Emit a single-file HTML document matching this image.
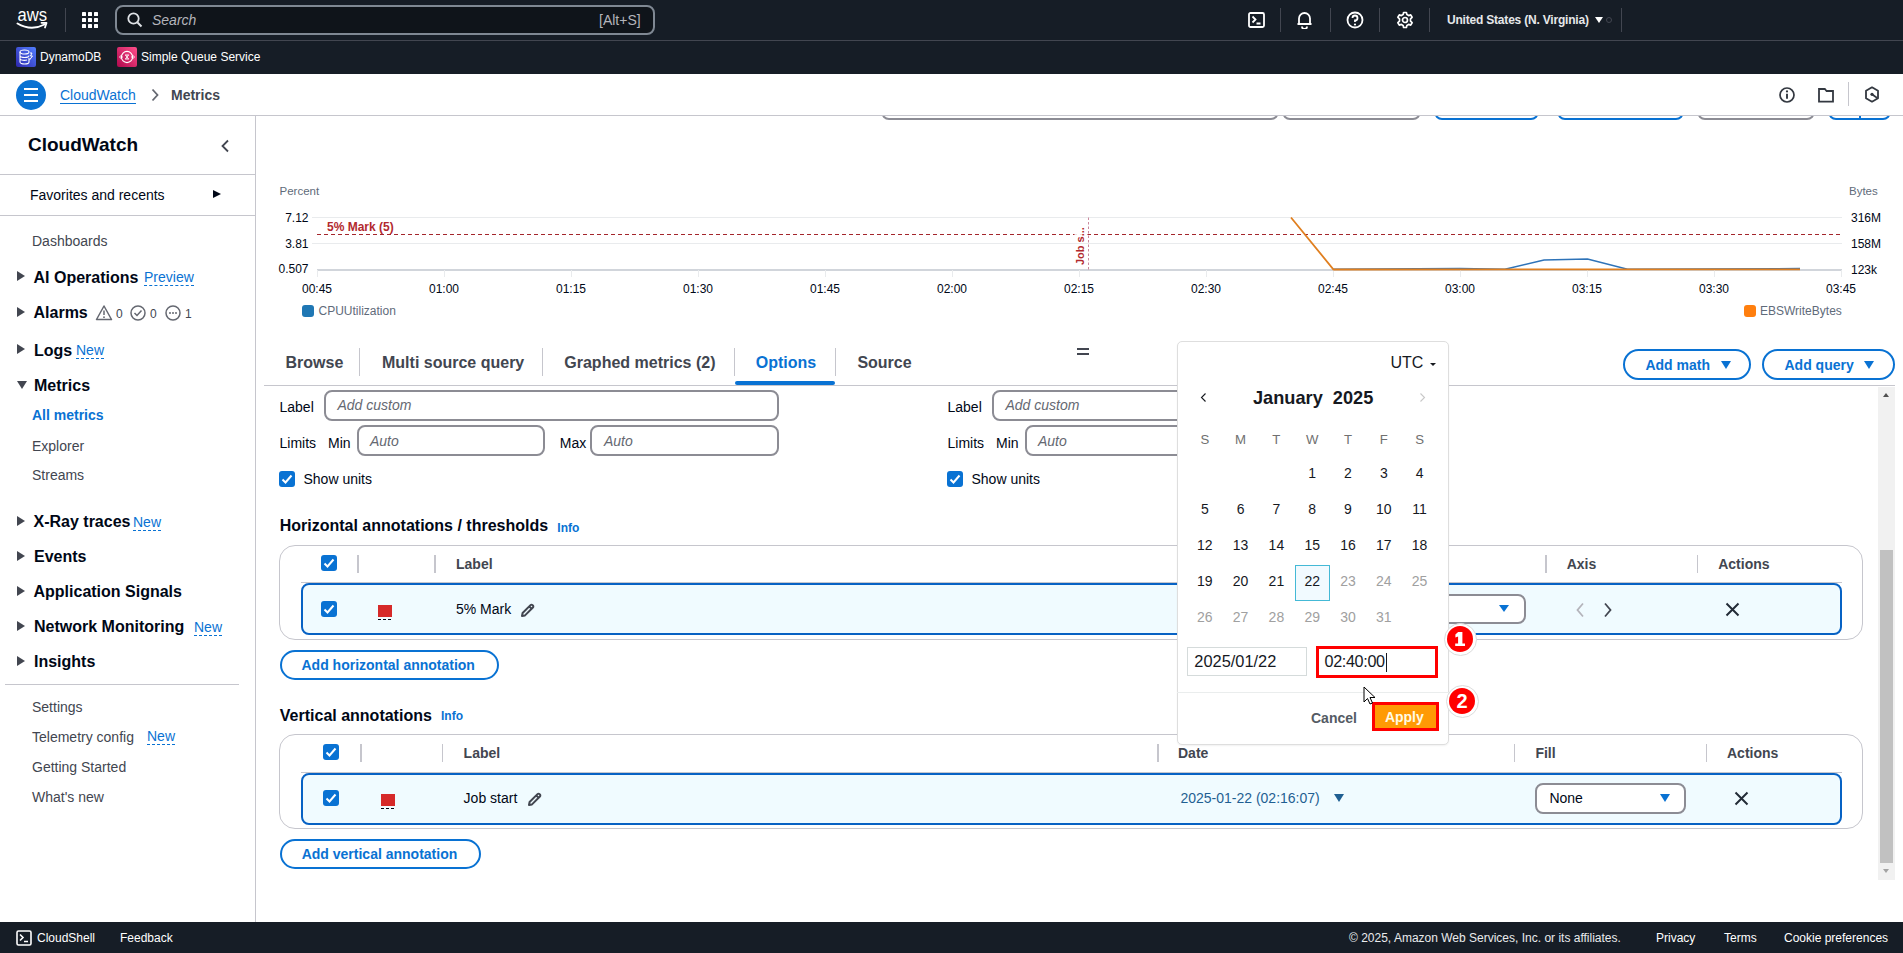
<!DOCTYPE html>
<html><head><meta charset="utf-8">
<style>
*{box-sizing:border-box;margin:0;padding:0}
html,body{width:1903px;height:953px;overflow:hidden;background:#fff;font-family:"Liberation Sans",sans-serif;color:#000716}
.a{position:absolute;white-space:nowrap}
#top{position:absolute;left:0;top:0;width:1903px;height:40px;background:#161d26}
#top2{position:absolute;left:0;top:40px;width:1903px;height:34px;background:#161d26;border-top:1px solid #424650}
.sep{position:absolute;width:1px;background:#424650}
#crumb{position:absolute;z-index:5;left:0;top:74px;width:1903px;height:42px;background:#fff;border-bottom:1px solid #c6c6cd}
#side{position:absolute;left:0;top:116px;width:256px;height:806px;border-right:1px solid #c6c6cd;background:#fff}
#foot{position:absolute;left:0;top:922px;width:1903px;height:31px;background:#161d26}
.w{color:#fff}
.nav{font-size:14px;color:#424650}
.navb{font-size:16px;font-weight:bold;color:#000716}
.new{font-size:14px;color:#0972d3;border-bottom:1px dashed #0972d3;line-height:15px}
.tri{position:absolute;width:0;height:0;border-top:5px solid transparent;border-bottom:5px solid transparent;border-left:8px solid #424650}
</style></head><body>

<!-- TOP BAR -->
<div id="top">
  <svg class="a" style="left:16px;top:8px" width="34" height="24" viewBox="0 0 34 24">
    <text x="1.5" y="12.6" font-family="Liberation Sans" font-size="17.5" fill="#fff" textLength="29.5" lengthAdjust="spacingAndGlyphs">aws</text>
    <path d="M1.5 15.5 Q15 23.5 28.5 16.5" stroke="#fff" stroke-width="1.9" fill="none" stroke-linecap="round"/>
    <path d="M25.5 14.8 L30.5 15 L29 19.5" stroke="#fff" stroke-width="1.8" fill="none" stroke-linecap="round" stroke-linejoin="round"/>
  </svg>
  <div class="sep" style="left:65px;top:8px;height:24px"></div>
  <svg class="a" style="left:82px;top:12px" width="17" height="17" viewBox="0 0 17 17" fill="#fff">
    <rect x="0" y="0" width="4" height="4" rx="0.6"/><rect x="6" y="0" width="4" height="4" rx="0.6"/><rect x="12" y="0" width="4" height="4" rx="0.6"/>
    <rect x="0" y="6" width="4" height="4" rx="0.6"/><rect x="6" y="6" width="4" height="4" rx="0.6"/><rect x="12" y="6" width="4" height="4" rx="0.6"/>
    <rect x="0" y="12" width="4" height="4" rx="0.6"/><rect x="6" y="12" width="4" height="4" rx="0.6"/><rect x="12" y="12" width="4" height="4" rx="0.6"/>
  </svg>
  <div class="a" style="left:115px;top:5px;width:540px;height:30px;border:2px solid #7f8893;border-radius:8px;background:#0f141a"></div>
  <svg class="a" style="left:127px;top:12px" width="16" height="16" viewBox="0 0 16 16"><circle cx="6.5" cy="6.5" r="5.2" stroke="#dfe2e6" stroke-width="1.8" fill="none"/><path d="M10.5 10.5 L14.5 14.5" stroke="#dfe2e6" stroke-width="2"/></svg>
  <div class="a" style="left:152px;top:12px;font-size:14px;font-style:italic;color:#b4b4bb">Search</div>
  <div class="a" style="left:599px;top:12px;font-size:14px;color:#b4b4bb">[Alt+S]</div>

  <svg class="a" style="left:1248px;top:12px" width="17" height="16" viewBox="0 0 17 16"><rect x="1" y="1" width="15" height="14" rx="1.5" stroke="#fff" stroke-width="1.8" fill="none"/><path d="M4.5 4.5 L7.5 7.5 L4.5 10.5 M8.5 11.5 H12.5" stroke="#fff" stroke-width="1.8" fill="none"/></svg>
  <div class="sep" style="left:1280px;top:8px;height:24px"></div>
  <svg class="a" style="left:1296px;top:11px" width="17" height="18" viewBox="0 0 17 18"><path d="M3 13 V7.5 A5.5 5.5 0 0 1 14 7.5 V13 Z M1.5 13 H15.5" stroke="#fff" stroke-width="1.8" fill="none" stroke-linejoin="round"/><path d="M6 15.5 A2.5 2.5 0 0 0 11 15.5" stroke="#fff" stroke-width="1.8" fill="none"/></svg>
  <div class="sep" style="left:1330px;top:8px;height:24px"></div>
  <svg class="a" style="left:1346px;top:11px" width="18" height="18" viewBox="0 0 18 18"><circle cx="9" cy="9" r="7.5" stroke="#fff" stroke-width="1.8" fill="none"/><path d="M6.5 7 A2.5 2.5 0 1 1 9 9.5 V11" stroke="#fff" stroke-width="1.8" fill="none"/><circle cx="9" cy="13.5" r="1.1" fill="#fff"/></svg>
  <div class="sep" style="left:1379px;top:8px;height:24px"></div>
  <svg class="a" style="left:1396px;top:11px" width="18" height="18" viewBox="0 0 18 18"><path d="M7.6 1.5 H10.4 L10.9 3.6 L12.6 4.6 L14.7 3.9 L16.1 6.3 L14.5 7.8 V10.2 L16.1 11.7 L14.7 14.1 L12.6 13.4 L10.9 14.4 L10.4 16.5 H7.6 L7.1 14.4 L5.4 13.4 L3.3 14.1 L1.9 11.7 L3.5 10.2 V7.8 L1.9 6.3 L3.3 3.9 L5.4 4.6 L7.1 3.6 Z" stroke="#fff" stroke-width="1.7" fill="none" stroke-linejoin="round"/><circle cx="9" cy="9" r="2.5" stroke="#fff" stroke-width="1.7" fill="none"/></svg>
  <div class="sep" style="left:1429px;top:8px;height:24px"></div>
  <div class="a w" style="left:1447px;top:13.8px;font-size:12px;line-height:1;font-weight:bold;letter-spacing:-0.2px;color:#e6e8ea">United States (N. Virginia)</div>
  <div class="a" style="left:1606px;top:16.5px;width:6px;height:6px;border:1px solid #424650;border-radius:50%"></div>
  <div class="a" style="left:1595px;top:17px;width:0;height:0;border-left:4px solid transparent;border-right:4px solid transparent;border-top:6.5px solid #fff"></div>
  <div class="sep" style="left:1621px;top:8px;height:24px"></div>
</div>
<div id="top2">
  <div class="a" style="left:16px;top:6px;width:20px;height:20px;border-radius:2px;background:linear-gradient(45deg,#2e27ad,#527fff)"></div>
  <svg class="a" style="left:16px;top:6px" width="20" height="20" viewBox="0 0 20 20"><ellipse cx="8.5" cy="5" rx="4.5" ry="2" stroke="#fff" stroke-width="1.1" fill="none"/><path d="M4 5 V15 A4.5 2 0 0 0 13 15 V11 M4 8.5 A4.5 2 0 0 0 13 8.5 M4 12 A4.5 2 0 0 0 11 13" stroke="#fff" stroke-width="1.1" fill="none"/><path d="M14 6 L16 6 L14.5 9 L16.5 9 L13.5 13" stroke="#fff" stroke-width="1" fill="none"/></svg>
  <div class="a w" style="left:40px;top:10px;line-height:1;font-size:12px;color:#fff">DynamoDB</div>
  <div class="a" style="left:117px;top:6px;width:20px;height:20px;border-radius:2px;background:linear-gradient(45deg,#b0084d,#ff4f8b)"></div>
  <svg class="a" style="left:117px;top:6px" width="20" height="20" viewBox="0 0 20 20"><circle cx="10" cy="10" r="5.6" stroke="#fff" stroke-width="1.1" fill="none"/><path d="M2.5 10 L4 8.5 L5.5 10 L4 11.5 Z M17.5 10 L16 8.5 L14.5 10 L16 11.5 Z" stroke="#fff" stroke-width="0.9" fill="none"/><path d="M8 8 H12 M8 12 H12 M8.5 8 L11.5 12 M11.5 8 L8.5 12" stroke="#fff" stroke-width="0.9" fill="none"/></svg>
  <div class="a w" style="left:141px;top:10px;line-height:1;font-size:12px;color:#fff">Simple Queue Service</div>
</div>

<!-- BREADCRUMB -->
<div id="crumb">
  <div class="a" style="left:16px;top:6px;width:30px;height:30px;border-radius:50%;background:#0972d3"></div>
  <div class="a" style="left:24px;top:14px;width:14px;height:2.4px;background:#fff"></div>
  <div class="a" style="left:24px;top:19.8px;width:14px;height:2.4px;background:#fff"></div>
  <div class="a" style="left:24px;top:25.6px;width:14px;height:2.4px;background:#fff"></div>
  <div class="a" style="left:60px;top:13px;font-size:14px;color:#0972d3;border-bottom:1px solid #0972d3;line-height:16px">CloudWatch</div>
  <svg class="a" style="left:150px;top:14px" width="10" height="14" viewBox="0 0 10 14"><path d="M2.5 1.5 L7.5 7 L2.5 12.5" stroke="#656871" stroke-width="1.8" fill="none"/></svg>
  <div class="a" style="left:171px;top:13px;font-size:14px;font-weight:bold;color:#424650">Metrics</div>
  <svg class="a" style="left:1777.5px;top:12.3px" width="18" height="18" viewBox="0 0 18 18"><circle cx="9" cy="9" r="7" stroke="#333840" stroke-width="1.7" fill="none"/><path d="M9 7.8 V12.8" stroke="#333840" stroke-width="1.9"/><circle cx="9" cy="5.4" r="1.1" fill="#333840"/></svg>
  <svg class="a" style="left:1817.3px;top:12.8px" width="18" height="17" viewBox="0 0 18 17"><path d="M2 2 H7.8 L9.6 4 H16 V14.6 H2 Z" stroke="#333840" stroke-width="1.8" fill="none" stroke-linejoin="miter"/></svg>
  <div class="sep" style="left:1848px;top:8px;height:24px;background:#c6c6cd"></div>
  <svg class="a" style="left:1863px;top:12px" width="18" height="18" viewBox="0 0 18 18"><path d="M9 1.3 L15 4.8 V12.2 L9 15.7 L3 12.2 V4.8 Z" stroke="#333840" stroke-width="1.8" fill="none" stroke-linejoin="round"/><circle cx="9" cy="8.3" r="1.6" fill="#333840"/><path d="M9 8.3 L14.2 12" stroke="#333840" stroke-width="1.7"/></svg>
</div>

<!-- SIDEBAR -->
<div id="side"></div>
<div class="a" style="left:28px;top:134.9px;font-size:19px;line-height:1;font-weight:bold;color:#000716">CloudWatch</div>
<svg class="a" style="left:219px;top:139px" width="12" height="14" viewBox="0 0 12 14"><path d="M9 1.5 L3.5 7 L9 12.5" stroke="#424650" stroke-width="1.8" fill="none"/></svg>
<div class="a" style="left:0px;top:174px;width:256px;height:1px;background:#c6c6cd"></div>
<div class="a" style="left:30px;top:187.8px;font-size:14px;line-height:1;color:#000716">Favorites and recents</div>
<div class="a" style="left:213px;top:190.3px;width:0;height:0;border-top:4.7px solid transparent;border-bottom:4.7px solid transparent;border-left:8.4px solid #000716"></div>
<div class="a" style="left:0px;top:215px;width:256px;height:1px;background:#c6c6cd"></div>
<div class="a" style="left:32px;top:234.3px;font-size:14px;line-height:1;color:#424650">Dashboards</div>
<div class="a" style="left:17px;top:271.2px;width:0;height:0;border-top:5px solid transparent;border-bottom:5px solid transparent;border-left:8.8px solid #424650"></div>
<div class="a" style="left:33.5px;top:269.5px;font-size:16px;line-height:1;font-weight:bold;color:#000716">AI Operations</div>
<div class="a" style="left:144px;top:270.3px;font-size:14px;line-height:15px;color:#0972d3;padding-bottom:0;border-bottom:1px dashed #0972d3">Preview</div>
<div class="a" style="left:17px;top:307.2px;width:0;height:0;border-top:5px solid transparent;border-bottom:5px solid transparent;border-left:8.8px solid #424650"></div>
<div class="a" style="left:33.5px;top:305.1px;font-size:16px;line-height:1;font-weight:bold;color:#000716">Alarms</div>
<svg class="a" style="left:95px;top:304px" width="100" height="18" viewBox="0 0 100 18">
<path d="M9 2 L16.5 15.5 H1.5 Z" stroke="#656871" stroke-width="1.5" fill="none" stroke-linejoin="round"/><path d="M9 6.5 V11" stroke="#656871" stroke-width="1.5"/><circle cx="9" cy="13.2" r="0.9" fill="#656871"/>
<circle cx="43" cy="9" r="7" stroke="#656871" stroke-width="1.5" fill="none"/><path d="M39.5 9 L42 11.5 L46.5 6.5" stroke="#656871" stroke-width="1.5" fill="none"/>
<circle cx="78" cy="9" r="7" stroke="#656871" stroke-width="1.5" fill="none"/><circle cx="75" cy="9" r="1" fill="#656871"/><circle cx="78" cy="9" r="1" fill="#656871"/><circle cx="81" cy="9" r="1" fill="#656871"/>
</svg>
<div class="a" style="left:116px;top:308.4px;font-size:12px;line-height:1;color:#424650">0</div>
<div class="a" style="left:150px;top:308.4px;font-size:12px;line-height:1;color:#424650">0</div>
<div class="a" style="left:185px;top:308.4px;font-size:12px;line-height:1;color:#424650">1</div>
<div class="a" style="left:17px;top:344.0px;width:0;height:0;border-top:5px solid transparent;border-bottom:5px solid transparent;border-left:8.8px solid #424650"></div>
<div class="a" style="left:34px;top:342.7px;font-size:16px;line-height:1;font-weight:bold;color:#000716">Logs</div>
<div class="a" style="left:76px;top:342.9px;font-size:14px;line-height:15px;color:#0972d3;padding-bottom:0;border-bottom:1px dashed #0972d3">New</div>
<div class="a" style="left:16.5px;top:380.7px;width:0;height:0;border-left:5px solid transparent;border-right:5px solid transparent;border-top:8.6px solid #424650"></div>
<div class="a" style="left:34px;top:377.5px;font-size:16px;line-height:1;font-weight:bold;color:#000716">Metrics</div>
<div class="a" style="left:32px;top:408.1px;font-size:14px;line-height:1;font-weight:bold;color:#0972d3">All metrics</div>
<div class="a" style="left:32px;top:438.5px;font-size:14px;line-height:1;color:#424650">Explorer</div>
<div class="a" style="left:32px;top:468.1px;font-size:14px;line-height:1;color:#424650">Streams</div>
<div class="a" style="left:17px;top:516.0px;width:0;height:0;border-top:5px solid transparent;border-bottom:5px solid transparent;border-left:8.8px solid #424650"></div>
<div class="a" style="left:33.5px;top:513.9px;font-size:16px;line-height:1;font-weight:bold;color:#000716">X-Ray traces</div>
<div class="a" style="left:133px;top:514.5px;font-size:14px;line-height:15px;color:#0972d3;padding-bottom:0;border-bottom:1px dashed #0972d3">New</div>
<div class="a" style="left:17px;top:551.0px;width:0;height:0;border-top:5px solid transparent;border-bottom:5px solid transparent;border-left:8.8px solid #424650"></div>
<div class="a" style="left:34px;top:548.9px;font-size:16px;line-height:1;font-weight:bold;color:#000716">Events</div>
<div class="a" style="left:17px;top:586.0px;width:0;height:0;border-top:5px solid transparent;border-bottom:5px solid transparent;border-left:8.8px solid #424650"></div>
<div class="a" style="left:33.5px;top:583.9px;font-size:16px;line-height:1;font-weight:bold;color:#000716">Application Signals</div>
<div class="a" style="left:17px;top:621.0px;width:0;height:0;border-top:5px solid transparent;border-bottom:5px solid transparent;border-left:8.8px solid #424650"></div>
<div class="a" style="left:34px;top:619.4px;font-size:16px;line-height:1;font-weight:bold;color:#000716">Network Monitoring</div>
<div class="a" style="left:194px;top:619.9px;font-size:14px;line-height:15px;color:#0972d3;padding-bottom:0;border-bottom:1px dashed #0972d3">New</div>
<div class="a" style="left:17px;top:656.0px;width:0;height:0;border-top:5px solid transparent;border-bottom:5px solid transparent;border-left:8.8px solid #424650"></div>
<div class="a" style="left:34px;top:654.4px;font-size:16px;line-height:1;font-weight:bold;color:#000716">Insights</div>
<div class="a" style="left:5px;top:684px;width:234px;height:1px;background:#c6c6cd"></div>
<div class="a" style="left:32px;top:700.1px;font-size:14px;line-height:1;color:#424650">Settings</div>
<div class="a" style="left:32px;top:729.9px;font-size:14px;line-height:1;color:#424650">Telemetry config</div>
<div class="a" style="left:147px;top:729.1px;font-size:14px;line-height:15px;color:#0972d3;padding-bottom:0;border-bottom:1px dashed #0972d3">New</div>
<div class="a" style="left:32px;top:759.8px;font-size:14px;line-height:1;color:#424650">Getting Started</div>
<div class="a" style="left:32px;top:789.7px;font-size:14px;line-height:1;color:#424650">What's new</div>
<!-- MAIN -->
<div class="a" style="left:881px;top:90px;width:398px;height:30px;border:2px solid #8c8c94;border-radius:8px;z-index:0"></div>
<div class="a" style="left:1282px;top:90px;width:139px;height:30px;border:2px solid #8c8c94;border-radius:8px;z-index:0"></div>
<div class="a" style="left:1434px;top:90px;width:105px;height:30px;border:2px solid #0972d3;border-radius:8px;z-index:0"></div>
<div class="a" style="left:1557px;top:90px;width:127px;height:30px;border:2px solid #0972d3;border-radius:8px;z-index:0"></div>
<div class="a" style="left:1697px;top:90px;width:118px;height:30px;border:2px solid #8c8c94;border-radius:8px;z-index:0"></div>
<div class="a" style="left:1828px;top:90px;width:63px;height:30px;border:2px solid #0972d3;border-radius:8px;z-index:0"></div>
<div class="a" style="left:1859px;top:110px;width:1.5px;height:10px;background:#0972d3"></div>
<div class="a" style="left:279.5px;top:186.1px;font-size:11.5px;line-height:1;color:#5f6b7a">Percent</div>
<div class="a" style="right:1594.5px;text-align:right;top:211.6px;font-size:12px;line-height:1;color:#000716">7.12</div>
<div class="a" style="right:1594.5px;text-align:right;top:237.6px;font-size:12px;line-height:1;color:#000716">3.81</div>
<div class="a" style="right:1594.5px;text-align:right;top:263.3px;font-size:12px;line-height:1;color:#000716">0.507</div>
<div class="a" style="left:1849px;top:186.3px;font-size:11.5px;line-height:1;color:#5f6b7a">Bytes</div>
<div class="a" style="left:1851px;top:211.6px;font-size:12px;line-height:1;color:#000716">316M</div>
<div class="a" style="left:1851px;top:237.8px;font-size:12px;line-height:1;color:#000716">158M</div>
<div class="a" style="left:1851px;top:263.8px;font-size:12px;line-height:1;color:#000716">123k</div>
<div class="a" style="left:312px;top:217px;width:1530px;height:1px;background:#e9ebed"></div>
<div class="a" style="left:312px;top:243px;width:1530px;height:1px;background:#e9ebed"></div>
<div class="a" style="left:317px;top:268.5px;width:1525px;height:2px;background:#d1d5db"></div>
<div class="a" style="left:317px;top:270px;width:1px;height:7px;background:#e9ebed"></div>
<div class="a" style="left:267px;width:100px;text-align:center;top:282.8px;font-size:12px;line-height:1;color:#000716">00:45</div>
<div class="a" style="left:444px;top:270px;width:1px;height:7px;background:#e9ebed"></div>
<div class="a" style="left:394px;width:100px;text-align:center;top:282.8px;font-size:12px;line-height:1;color:#000716">01:00</div>
<div class="a" style="left:571px;top:270px;width:1px;height:7px;background:#e9ebed"></div>
<div class="a" style="left:521px;width:100px;text-align:center;top:282.8px;font-size:12px;line-height:1;color:#000716">01:15</div>
<div class="a" style="left:698px;top:270px;width:1px;height:7px;background:#e9ebed"></div>
<div class="a" style="left:648px;width:100px;text-align:center;top:282.8px;font-size:12px;line-height:1;color:#000716">01:30</div>
<div class="a" style="left:825px;top:270px;width:1px;height:7px;background:#e9ebed"></div>
<div class="a" style="left:775px;width:100px;text-align:center;top:282.8px;font-size:12px;line-height:1;color:#000716">01:45</div>
<div class="a" style="left:952px;top:270px;width:1px;height:7px;background:#e9ebed"></div>
<div class="a" style="left:902px;width:100px;text-align:center;top:282.8px;font-size:12px;line-height:1;color:#000716">02:00</div>
<div class="a" style="left:1079px;top:270px;width:1px;height:7px;background:#e9ebed"></div>
<div class="a" style="left:1029px;width:100px;text-align:center;top:282.8px;font-size:12px;line-height:1;color:#000716">02:15</div>
<div class="a" style="left:1206px;top:270px;width:1px;height:7px;background:#e9ebed"></div>
<div class="a" style="left:1156px;width:100px;text-align:center;top:282.8px;font-size:12px;line-height:1;color:#000716">02:30</div>
<div class="a" style="left:1333px;top:270px;width:1px;height:7px;background:#e9ebed"></div>
<div class="a" style="left:1283px;width:100px;text-align:center;top:282.8px;font-size:12px;line-height:1;color:#000716">02:45</div>
<div class="a" style="left:1460px;top:270px;width:1px;height:7px;background:#e9ebed"></div>
<div class="a" style="left:1410px;width:100px;text-align:center;top:282.8px;font-size:12px;line-height:1;color:#000716">03:00</div>
<div class="a" style="left:1587px;top:270px;width:1px;height:7px;background:#e9ebed"></div>
<div class="a" style="left:1537px;width:100px;text-align:center;top:282.8px;font-size:12px;line-height:1;color:#000716">03:15</div>
<div class="a" style="left:1714px;top:270px;width:1px;height:7px;background:#e9ebed"></div>
<div class="a" style="left:1664px;width:100px;text-align:center;top:282.8px;font-size:12px;line-height:1;color:#000716">03:30</div>
<div class="a" style="left:1841px;top:270px;width:1px;height:7px;background:#e9ebed"></div>
<div class="a" style="left:1791px;width:100px;text-align:center;top:282.8px;font-size:12px;line-height:1;color:#000716">03:45</div>
<svg class="a" style="left:0;top:0" width="1903" height="330">
<line x1="317" y1="234.5" x2="1842" y2="234.5" stroke="#a4262c" stroke-width="1.2" stroke-dasharray="4,3"/>
<rect x="1074.5" y="229" width="13" height="11" fill="#fff" fill-opacity="0.85"/>
<line x1="1088.5" y1="217.5" x2="1088.5" y2="270" stroke="#c98a9f" stroke-width="1" stroke-dasharray="2.5,2"/>
<polyline points="1333,269.3 1460,268.6 1505,269.3 1544,260 1587.5,259 1627.5,269.3 1800,268.6" stroke="#2e73b8" stroke-width="1.6" fill="none"/>
<polyline points="1291,217.5 1333.5,269.5 1800,269.3" stroke="#e07f1f" stroke-width="1.8" fill="none"/>
<text x="0" y="0" transform="translate(1084.3,265) rotate(-90)" font-family="Liberation Sans" font-size="11" font-weight="bold" fill="#b2292e">Job s...</text>
</svg>
<div class="a" style="left:327px;top:220.8px;font-size:12px;line-height:1;font-weight:bold;color:#b2292e">5% Mark (5)</div>
<div class="a" style="left:302px;top:305px;width:12px;height:12px;background:#1f77b4;border-radius:3px"></div>
<div class="a" style="left:318.5px;top:305.1px;font-size:12px;line-height:1;color:#5f6b7a">CPUUtilization</div>
<div class="a" style="left:1744px;top:305px;width:12px;height:12px;background:#ff7f0e;border-radius:3px"></div>
<div class="a" style="left:1760px;top:305.1px;font-size:12px;line-height:1;color:#5f6b7a">EBSWriteBytes</div>
<div class="a" style="left:285.5px;top:355.0px;font-size:16px;line-height:1;font-weight:bold;color:#424650">Browse</div>
<div class="a" style="left:359px;top:348px;width:1px;height:28px;background:#c6c6cd"></div>
<div class="a" style="left:382px;top:355.0px;font-size:16px;line-height:1;font-weight:bold;color:#424650">Multi source query</div>
<div class="a" style="left:542px;top:348px;width:1px;height:28px;background:#c6c6cd"></div>
<div class="a" style="left:564.3px;top:355.0px;font-size:16px;line-height:1;font-weight:bold;color:#424650">Graphed metrics (2)</div>
<div class="a" style="left:733.5px;top:348px;width:1px;height:28px;background:#c6c6cd"></div>
<div class="a" style="left:755.8px;top:355.0px;font-size:16px;line-height:1;font-weight:bold;color:#0972d3">Options</div>
<div class="a" style="left:835px;top:348px;width:1px;height:28px;background:#c6c6cd"></div>
<div class="a" style="left:857.4px;top:355.0px;font-size:16px;line-height:1;font-weight:bold;color:#424650">Source</div>
<div class="a" style="left:264px;top:385px;width:1631px;height:1px;background:#c6c6cd"></div>
<div class="a" style="left:735.3px;top:381px;width:99.5px;height:4px;background:#0972d3;border-radius:4px"></div>
<div class="a" style="left:1077px;top:348px;width:12px;height:2px;background:#424650"></div>
<div class="a" style="left:1077px;top:353px;width:12px;height:2px;background:#424650"></div>
<div class="a" style="left:1623.4px;top:349.3px;width:127.89999999999986px;height:31.099999999999966px;border:2px solid #0972d3;border-radius:20px;background:#fff"></div>
<div class="a" style="left:1645.4px;top:357.8px;font-size:14px;line-height:1;font-weight:bold;color:#0972d3">Add math</div>
<div class="a" style="left:1721px;top:361.2px;width:0;height:0;border-left:5px solid transparent;border-right:5px solid transparent;border-top:8px solid #0972d3"></div>
<div class="a" style="left:1762.4px;top:349.3px;width:132.19999999999982px;height:31.099999999999966px;border:2px solid #0972d3;border-radius:20px;background:#fff"></div>
<div class="a" style="left:1784.5px;top:357.8px;font-size:14px;line-height:1;font-weight:bold;color:#0972d3">Add query</div>
<div class="a" style="left:1863.5px;top:361.2px;width:0;height:0;border-left:5px solid transparent;border-right:5px solid transparent;border-top:8px solid #0972d3"></div>
<div class="a" style="left:279.5px;top:400.3px;font-size:14px;line-height:1;color:#000716">Label</div>
<div class="a" style="left:323.8px;top:390px;width:455.2px;height:30.5px;border:2px solid #8c8c94;border-radius:8px;background:#fff"></div>
<div class="a" style="left:337.5px;top:398.4px;font-size:14px;line-height:1;font-style:italic;color:#656871">Add custom</div>
<div class="a" style="left:279.5px;top:436.1px;font-size:14px;line-height:1;color:#000716">Limits</div>
<div class="a" style="left:328px;top:436.1px;font-size:14px;line-height:1;color:#000716">Min</div>
<div class="a" style="left:356.5px;top:425.4px;width:188.20000000000005px;height:31.100000000000023px;border:2px solid #8c8c94;border-radius:8px;background:#fff"></div>
<div class="a" style="left:370px;top:434.4px;font-size:14px;line-height:1;font-style:italic;color:#656871">Auto</div>
<div class="a" style="left:559.8px;top:436.1px;font-size:14px;line-height:1;color:#000716">Max</div>
<div class="a" style="left:590px;top:425.4px;width:189px;height:31.100000000000023px;border:2px solid #8c8c94;border-radius:8px;background:#fff"></div>
<div class="a" style="left:604px;top:434.4px;font-size:14px;line-height:1;font-style:italic;color:#656871">Auto</div>
<svg class="a" style="left:279px;top:471px" width="16" height="16" viewBox="0 0 16 16"><rect x="0" y="0" width="16" height="16" rx="3" fill="#0972d3"/><path d="M3.5 8.5 L6.5 11.5 L12.5 4.5" stroke="#fff" stroke-width="2" fill="none"/></svg>
<div class="a" style="left:303.5px;top:472.1px;font-size:14px;line-height:1;color:#000716">Show units</div>
<div class="a" style="left:947.5px;top:400.3px;font-size:14px;line-height:1;color:#000716">Label</div>
<div class="a" style="left:991.8px;top:390px;width:455.20000000000005px;height:30.5px;border:2px solid #8c8c94;border-radius:8px;background:#fff"></div>
<div class="a" style="left:1005.5px;top:398.4px;font-size:14px;line-height:1;font-style:italic;color:#656871">Add custom</div>
<div class="a" style="left:947.5px;top:436.1px;font-size:14px;line-height:1;color:#000716">Limits</div>
<div class="a" style="left:996px;top:436.1px;font-size:14px;line-height:1;color:#000716">Min</div>
<div class="a" style="left:1024.5px;top:425.4px;width:188.20000000000005px;height:31.100000000000023px;border:2px solid #8c8c94;border-radius:8px;background:#fff"></div>
<div class="a" style="left:1038px;top:434.4px;font-size:14px;line-height:1;font-style:italic;color:#656871">Auto</div>
<div class="a" style="left:1227.8px;top:436.1px;font-size:14px;line-height:1;color:#000716">Max</div>
<div class="a" style="left:1258px;top:425.4px;width:189px;height:31.100000000000023px;border:2px solid #8c8c94;border-radius:8px;background:#fff"></div>
<div class="a" style="left:1272px;top:434.4px;font-size:14px;line-height:1;font-style:italic;color:#656871">Auto</div>
<svg class="a" style="left:947px;top:471px" width="16" height="16" viewBox="0 0 16 16"><rect x="0" y="0" width="16" height="16" rx="3" fill="#0972d3"/><path d="M3.5 8.5 L6.5 11.5 L12.5 4.5" stroke="#fff" stroke-width="2" fill="none"/></svg>
<div class="a" style="left:971.5px;top:472.1px;font-size:14px;line-height:1;color:#000716">Show units</div>
<div class="a" style="left:279.7px;top:518.3px;font-size:16px;line-height:1;font-weight:bold;color:#000716">Horizontal annotations / thresholds</div>
<div class="a" style="left:557.3px;top:522.0px;font-size:12px;line-height:1;font-weight:bold;color:#0972d3">Info</div>
<div class="a" style="left:279.3px;top:545.4px;width:1583.5px;height:95.10000000000002px;border:1px solid #c6c6cd;border-radius:16px;background:#fff"></div>
<svg class="a" style="left:321px;top:555px" width="16" height="16" viewBox="0 0 16 16"><rect x="0" y="0" width="16" height="16" rx="3" fill="#0972d3"/><path d="M3.5 8.5 L6.5 11.5 L12.5 4.5" stroke="#fff" stroke-width="2" fill="none"/></svg>
<div class="a" style="left:357px;top:554.5px;width:2px;height:18px;background:#c6c6cd;width:1.5px"></div>
<div class="a" style="left:434px;top:554.5px;width:2px;height:18px;background:#c6c6cd;width:1.5px"></div>
<div class="a" style="left:1545px;top:554.5px;width:2px;height:18px;background:#c6c6cd;width:1.5px"></div>
<div class="a" style="left:1696.5px;top:554.5px;width:2px;height:18px;background:#c6c6cd;width:1.5px"></div>
<div class="a" style="left:456px;top:556.9px;font-size:14px;line-height:1;font-weight:bold;color:#424650">Label</div>
<div class="a" style="left:1566.7px;top:556.9px;font-size:14px;line-height:1;font-weight:bold;color:#424650">Axis</div>
<div class="a" style="left:1718.2px;top:556.9px;font-size:14px;line-height:1;font-weight:bold;color:#424650">Actions</div>
<div class="a" style="left:300.5px;top:582.2px;width:1541px;height:1px;background:#c6c6cd"></div>
<div class="a" style="left:300.5px;top:583.4px;width:1541px;height:52px;border:2px solid #0762c4;border-radius:8px;background:#f0fbff"></div>
<svg class="a" style="left:321px;top:601px" width="16" height="16" viewBox="0 0 16 16"><rect x="0" y="0" width="16" height="16" rx="3" fill="#0972d3"/><path d="M3.5 8.5 L6.5 11.5 L12.5 4.5" stroke="#fff" stroke-width="2" fill="none"/></svg>
<div class="a" style="left:378px;top:605px;width:14px;height:11.6px;background:#d62a2a"></div>
<div class="a" style="left:378px;top:618.5px;width:14px;height:1.5px;background:repeating-linear-gradient(90deg,#000716 0 3px,transparent 3px 5px)"></div>
<div class="a" style="left:456px;top:602.2px;font-size:14px;line-height:1;color:#000716">5% Mark</div>
<svg class="a" style="left:520px;top:603.1px" width="15" height="15" viewBox="0 0 15 15"><path d="M2 13 L2.6 10 L10.5 2.1 A1.4 1.4 0 0 1 12.5 2.1 L12.9 2.5 A1.4 1.4 0 0 1 12.9 4.5 L5 12.4 Z M9.2 3.4 L11.6 5.8" stroke="#424650" stroke-width="2" fill="none" stroke-linejoin="round"/></svg>
<div class="a" style="left:1300px;top:593.6px;width:225.5px;height:30.5px;border:2px solid #8c8c94;border-radius:8px;background:#fff"></div>
<div class="a" style="left:1499px;top:605.4px;width:0;height:0;border-left:5.2px solid transparent;border-right:5.2px solid transparent;border-top:7.5px solid #0972d3"></div>
<svg class="a" style="left:1574px;top:602px" width="40" height="16" viewBox="0 0 40 16"><path d="M9 1.5 L3.5 8 L9 14.5" stroke="#b4b4bb" stroke-width="1.8" fill="none"/><path d="M31 1.5 L36.5 8 L31 14.5" stroke="#424650" stroke-width="1.8" fill="none"/></svg>
<svg class="a" style="left:1724.5px;top:601.5px" width="15" height="15" viewBox="0 0 15 15"><path d="M1.5 1.5 L13.5 13.5 M13.5 1.5 L1.5 13.5" stroke="#232b37" stroke-width="2" fill="none"/></svg>
<div class="a" style="left:279.5px;top:649.6px;width:219px;height:30.7px;border:2px solid #0972d3;border-radius:20px;background:#fff"></div>
<div class="a" style="left:301.5px;top:658.1px;font-size:14px;line-height:1;font-weight:bold;color:#0972d3">Add horizontal annotation</div>
<div class="a" style="left:279.8px;top:707.5px;font-size:16px;line-height:1;font-weight:bold;color:#000716">Vertical annotations</div>
<div class="a" style="left:441px;top:710.3px;font-size:12px;line-height:1;font-weight:bold;color:#0972d3">Info</div>
<div class="a" style="left:279.3px;top:734.4px;width:1583.5px;height:95.10000000000002px;border:1px solid #c6c6cd;border-radius:16px;background:#fff"></div>
<svg class="a" style="left:323.3px;top:744.4px" width="16" height="16" viewBox="0 0 16 16"><rect x="0" y="0" width="16" height="16" rx="3" fill="#0972d3"/><path d="M3.5 8.5 L6.5 11.5 L12.5 4.5" stroke="#fff" stroke-width="2" fill="none"/></svg>
<div class="a" style="left:360px;top:743.9px;width:2px;height:18px;background:#c6c6cd;width:1.5px"></div>
<div class="a" style="left:441.5px;top:743.9px;width:2px;height:18px;background:#c6c6cd;width:1.5px"></div>
<div class="a" style="left:1157px;top:743.9px;width:2px;height:18px;background:#c6c6cd;width:1.5px"></div>
<div class="a" style="left:1513.5px;top:743.9px;width:2px;height:18px;background:#c6c6cd;width:1.5px"></div>
<div class="a" style="left:1705.5px;top:743.9px;width:2px;height:18px;background:#c6c6cd;width:1.5px"></div>
<div class="a" style="left:463.6px;top:745.7px;font-size:14px;line-height:1;font-weight:bold;color:#424650">Label</div>
<div class="a" style="left:1178px;top:745.7px;font-size:14px;line-height:1;font-weight:bold;color:#424650">Date</div>
<div class="a" style="left:1535.4px;top:745.7px;font-size:14px;line-height:1;font-weight:bold;color:#424650">Fill</div>
<div class="a" style="left:1727px;top:745.7px;font-size:14px;line-height:1;font-weight:bold;color:#424650">Actions</div>
<div class="a" style="left:300.5px;top:771.7px;width:1541px;height:1px;background:#c6c6cd"></div>
<div class="a" style="left:300.5px;top:772.9px;width:1541px;height:51.799999999999955px;border:2px solid #0762c4;border-radius:8px;background:#f0fbff"></div>
<svg class="a" style="left:323.3px;top:790.3px" width="16" height="16" viewBox="0 0 16 16"><rect x="0" y="0" width="16" height="16" rx="3" fill="#0972d3"/><path d="M3.5 8.5 L6.5 11.5 L12.5 4.5" stroke="#fff" stroke-width="2" fill="none"/></svg>
<div class="a" style="left:381px;top:794px;width:14px;height:11.6px;background:#d62a2a"></div>
<div class="a" style="left:381px;top:807.5px;width:14px;height:1.5px;background:repeating-linear-gradient(90deg,#000716 0 3px,transparent 3px 5px)"></div>
<div class="a" style="left:463.6px;top:791.1px;font-size:14px;line-height:1;color:#000716">Job start</div>
<svg class="a" style="left:527.3px;top:792px" width="15" height="15" viewBox="0 0 15 15"><path d="M2 13 L2.6 10 L10.5 2.1 A1.4 1.4 0 0 1 12.5 2.1 L12.9 2.5 A1.4 1.4 0 0 1 12.9 4.5 L5 12.4 Z M9.2 3.4 L11.6 5.8" stroke="#424650" stroke-width="2" fill="none" stroke-linejoin="round"/></svg>
<div class="a" style="left:1180.4px;top:790.8px;font-size:14px;line-height:1;color:#1f5f92">2025-01-22 (02:16:07)</div>
<div class="a" style="left:1333.6px;top:793.5px;width:0;height:0;border-left:5.2px solid transparent;border-right:5.2px solid transparent;border-top:8px solid #1f5f92"></div>
<div class="a" style="left:1535.4px;top:782.5px;width:151px;height:31px;border:2px solid #8c8c94;border-radius:8px;background:#fff"></div>
<div class="a" style="left:1549.4px;top:791.1px;font-size:14px;line-height:1;color:#000716">None</div>
<div class="a" style="left:1660px;top:794px;width:0;height:0;border-left:5.2px solid transparent;border-right:5.2px solid transparent;border-top:8px solid #0972d3"></div>
<svg class="a" style="left:1733.5px;top:790.5px" width="15" height="15" viewBox="0 0 15 15"><path d="M1.5 1.5 L13.5 13.5 M13.5 1.5 L1.5 13.5" stroke="#232b37" stroke-width="2" fill="none"/></svg>
<div class="a" style="left:279.5px;top:838.8px;width:201px;height:30.5px;border:2px solid #0972d3;border-radius:20px;background:#fff"></div>
<div class="a" style="left:301.7px;top:846.8px;font-size:14px;line-height:1;font-weight:bold;color:#0972d3">Add vertical annotation</div>
<div class="a" style="left:1878px;top:386.7px;width:17px;height:493px;background:#f1f1f1"></div>
<div class="a" style="left:1880px;top:550px;width:13px;height:313px;background:#c1c1c1"></div>
<div class="a" style="left:1883px;top:392.5px;width:0;height:0;border-left:3.6px solid transparent;border-right:3.6px solid transparent;border-bottom:4.5px solid #505050"></div>
<div class="a" style="left:1883px;top:869px;width:0;height:0;border-left:3.6px solid transparent;border-right:3.6px solid transparent;border-top:4.5px solid #a3a3a3"></div>
<!-- POPUP -->
<div class="a" style="left:1176.5px;top:341.3px;width:272px;height:403.5px;background:#fff;border:1px solid #dedede;border-radius:5px;box-shadow:0 1px 2px rgba(0,0,0,0.06)"></div>
<div class="a" style="left:1390.4px;top:354.5px;font-size:16px;line-height:1;color:#16191f">UTC</div>
<div class="a" style="left:1430px;top:362.5px;width:0;height:0;border-left:3px solid transparent;border-right:3px solid transparent;border-top:3.5px solid #16191f"></div>
<svg class="a" style="left:1199px;top:392px" width="9" height="11" viewBox="0 0 9 11"><path d="M6.5 1.5 L2.5 5.5 L6.5 9.5" stroke="#16191f" stroke-width="1.1" fill="none"/></svg>
<svg class="a" style="left:1418px;top:392px" width="9" height="11" viewBox="0 0 9 11"><path d="M2.5 1.5 L6.5 5.5 L2.5 9.5" stroke="#c8c8c8" stroke-width="1.1" fill="none"/></svg>
<div class="a" style="left:1253px;top:388.7px;font-size:18.2px;line-height:1;font-weight:bold;color:#16191f">January&nbsp;&nbsp;2025</div>
<div class="a" style="left:1154.8px;width:100px;text-align:center;top:432.5px;font-size:13.2px;line-height:1;color:#707070">S</div>
<div class="a" style="left:1190.6px;width:100px;text-align:center;top:432.5px;font-size:13.2px;line-height:1;color:#707070">M</div>
<div class="a" style="left:1226.4px;width:100px;text-align:center;top:432.5px;font-size:13.2px;line-height:1;color:#707070">T</div>
<div class="a" style="left:1262.2px;width:100px;text-align:center;top:432.5px;font-size:13.2px;line-height:1;color:#707070">W</div>
<div class="a" style="left:1298px;width:100px;text-align:center;top:432.5px;font-size:13.2px;line-height:1;color:#707070">T</div>
<div class="a" style="left:1333.8px;width:100px;text-align:center;top:432.5px;font-size:13.2px;line-height:1;color:#707070">F</div>
<div class="a" style="left:1369.6px;width:100px;text-align:center;top:432.5px;font-size:13.2px;line-height:1;color:#707070">S</div>
<div class="a" style="left:1295.2px;top:565.4px;width:34.7px;height:35.5px;background:#f1faff;border:1px solid #44b9d6"></div>
<div class="a" style="left:1262.2px;width:100px;text-align:center;top:466.2px;font-size:14px;line-height:1;color:#16191f">1</div>
<div class="a" style="left:1298px;width:100px;text-align:center;top:466.2px;font-size:14px;line-height:1;color:#16191f">2</div>
<div class="a" style="left:1333.8px;width:100px;text-align:center;top:466.2px;font-size:14px;line-height:1;color:#16191f">3</div>
<div class="a" style="left:1369.6px;width:100px;text-align:center;top:466.2px;font-size:14px;line-height:1;color:#16191f">4</div>
<div class="a" style="left:1154.8px;width:100px;text-align:center;top:502.2px;font-size:14px;line-height:1;color:#16191f">5</div>
<div class="a" style="left:1190.6px;width:100px;text-align:center;top:502.2px;font-size:14px;line-height:1;color:#16191f">6</div>
<div class="a" style="left:1226.4px;width:100px;text-align:center;top:502.2px;font-size:14px;line-height:1;color:#16191f">7</div>
<div class="a" style="left:1262.2px;width:100px;text-align:center;top:502.2px;font-size:14px;line-height:1;color:#16191f">8</div>
<div class="a" style="left:1298px;width:100px;text-align:center;top:502.2px;font-size:14px;line-height:1;color:#16191f">9</div>
<div class="a" style="left:1333.8px;width:100px;text-align:center;top:502.2px;font-size:14px;line-height:1;color:#16191f">10</div>
<div class="a" style="left:1369.6px;width:100px;text-align:center;top:502.2px;font-size:14px;line-height:1;color:#16191f">11</div>
<div class="a" style="left:1154.8px;width:100px;text-align:center;top:538.2px;font-size:14px;line-height:1;color:#16191f">12</div>
<div class="a" style="left:1190.6px;width:100px;text-align:center;top:538.2px;font-size:14px;line-height:1;color:#16191f">13</div>
<div class="a" style="left:1226.4px;width:100px;text-align:center;top:538.2px;font-size:14px;line-height:1;color:#16191f">14</div>
<div class="a" style="left:1262.2px;width:100px;text-align:center;top:538.2px;font-size:14px;line-height:1;color:#16191f">15</div>
<div class="a" style="left:1298px;width:100px;text-align:center;top:538.2px;font-size:14px;line-height:1;color:#16191f">16</div>
<div class="a" style="left:1333.8px;width:100px;text-align:center;top:538.2px;font-size:14px;line-height:1;color:#16191f">17</div>
<div class="a" style="left:1369.6px;width:100px;text-align:center;top:538.2px;font-size:14px;line-height:1;color:#16191f">18</div>
<div class="a" style="left:1154.8px;width:100px;text-align:center;top:574.2px;font-size:14px;line-height:1;color:#16191f">19</div>
<div class="a" style="left:1190.6px;width:100px;text-align:center;top:574.2px;font-size:14px;line-height:1;color:#16191f">20</div>
<div class="a" style="left:1226.4px;width:100px;text-align:center;top:574.2px;font-size:14px;line-height:1;color:#16191f">21</div>
<div class="a" style="left:1262.2px;width:100px;text-align:center;top:574.2px;font-size:14px;line-height:1;color:#16191f">22</div>
<div class="a" style="left:1298px;width:100px;text-align:center;top:574.2px;font-size:14px;line-height:1;color:#a0a0a0">23</div>
<div class="a" style="left:1333.8px;width:100px;text-align:center;top:574.2px;font-size:14px;line-height:1;color:#a0a0a0">24</div>
<div class="a" style="left:1369.6px;width:100px;text-align:center;top:574.2px;font-size:14px;line-height:1;color:#a0a0a0">25</div>
<div class="a" style="left:1154.8px;width:100px;text-align:center;top:610.2px;font-size:14px;line-height:1;color:#a0a0a0">26</div>
<div class="a" style="left:1190.6px;width:100px;text-align:center;top:610.2px;font-size:14px;line-height:1;color:#a0a0a0">27</div>
<div class="a" style="left:1226.4px;width:100px;text-align:center;top:610.2px;font-size:14px;line-height:1;color:#a0a0a0">28</div>
<div class="a" style="left:1262.2px;width:100px;text-align:center;top:610.2px;font-size:14px;line-height:1;color:#a0a0a0">29</div>
<div class="a" style="left:1298px;width:100px;text-align:center;top:610.2px;font-size:14px;line-height:1;color:#a0a0a0">30</div>
<div class="a" style="left:1333.8px;width:100px;text-align:center;top:610.2px;font-size:14px;line-height:1;color:#a0a0a0">31</div>
<div class="a" style="left:1187.4px;top:647.3px;width:119.2px;height:29px;border:1px solid #d5dbdb;background:#fff"></div>
<div class="a" style="left:1194.3px;top:653.1px;font-size:16.4px;line-height:1;color:#16191f">2025/01/22</div>
<div class="a" style="left:1316.2px;top:646.1px;width:121.6px;height:31.5px;border:3px solid #ff0000;background:#fff"></div>
<div class="a" style="left:1324.5px;top:653.3px;font-size:16.2px;line-height:1;color:#16191f;letter-spacing:-0.35px">02:40:00</div>
<div class="a" style="left:1386px;top:652.5px;width:1.2px;height:19px;background:#16191f"></div>
<div class="a" style="left:1177px;top:692px;width:271.5px;height:1px;background:#eaeded"></div>
<div class="a" style="left:1311px;top:711.0px;font-size:14px;line-height:1;font-weight:bold;color:#545b64">Cancel</div>
<div class="a" style="left:1372px;top:702px;width:66.8px;height:29px;border:3px solid #ff0000;background:#ff9a05"></div>
<div class="a" style="left:1384.9px;top:710.4px;font-size:14px;line-height:1;font-weight:bold;color:#fffbe6">Apply</div>
<div class="a" style="left:1443.6px;top:622.6px;width:33px;height:33px;background:#fff;border:1px solid #dcdcdc;border-radius:50%"></div>
<div class="a" style="left:1447.1px;top:626.1px;width:26px;height:26px;background:#f00;border-radius:50%"></div>
<svg class="a" style="left:1454.8999999999999px;top:631.7px" width="10.4" height="14.4" viewBox="0 0 10.4 14.4"><path d="M3.1 0 H7.4 V11.4 H10.2 V14.4 H0.2 V11.4 H3.1 V4.6 L0.4 5.6 V2.6 Z" fill="#fff"/></svg>
<div class="a" style="left:1445.5px;top:684.5px;width:33px;height:33px;background:#fff;border:1px solid #dcdcdc;border-radius:50%"></div>
<div class="a" style="left:1449px;top:688px;width:26px;height:26px;background:#f00;border-radius:50%"></div>
<div class="a" style="left:1412px;width:100px;text-align:center;top:691.4px;font-size:20px;line-height:1;font-weight:bold;color:#fff">2</div>
<svg class="a" style="left:1363px;top:686px" width="14" height="20" viewBox="0 0 14 20"><path d="M1 1 L1 16 L4.5 12.5 L7 18 L9.5 17 L7 11.5 L12 11.5 Z" fill="#fff" stroke="#000" stroke-width="1" stroke-linejoin="round"/></svg>
<!-- FOOTER -->
<div id="foot"></div>
<svg class="a" style="left:16px;top:930px" width="16" height="16" viewBox="0 0 16 16"><rect x="1" y="1" width="14" height="14" rx="1.5" stroke="#fff" stroke-width="1.6" fill="none"/><path d="M4 4.5 L7 7.5 L4 10.5 M8 11.5 H12" stroke="#fff" stroke-width="1.6" fill="none"/></svg>
<div class="a" style="left:37px;top:931.6px;font-size:12px;line-height:1;color:#fff">CloudShell</div>
<div class="a" style="left:120px;top:931.6px;font-size:12px;line-height:1;color:#fff">Feedback</div>
<div class="a" style="left:1349px;top:931.6px;font-size:12px;line-height:1;color:#e9ebed">© 2025, Amazon Web Services, Inc. or its affiliates.</div>
<div class="a" style="left:1656px;top:931.6px;font-size:12px;line-height:1;color:#fff">Privacy</div>
<div class="a" style="left:1724px;top:931.6px;font-size:12px;line-height:1;color:#fff">Terms</div>
<div class="a" style="left:1784px;top:931.6px;font-size:12px;line-height:1;color:#fff">Cookie preferences</div>

</body></html>
